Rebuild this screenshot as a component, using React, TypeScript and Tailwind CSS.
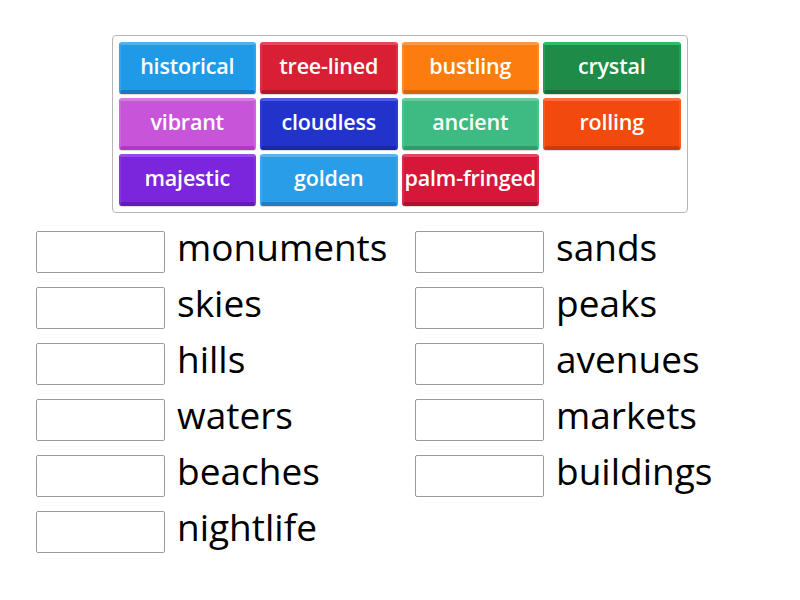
import React from "react";

const tiles = [
  { label: "historical", cls: "bg-[#1f9ae6] border-t-[#4cb4f2] border-b-[#1677c4] border-x-[#2ea5ee]" },
  { label: "tree-lined", cls: "bg-[#d81f33] border-t-[#e5485a] border-b-[#b3162a] border-x-[#df3144]" },
  { label: "bustling", cls: "bg-[#fd7c0e] border-t-[#ff9a40] border-b-[#dc6306] border-x-[#ff8a22]" },
  { label: "crystal", cls: "bg-[#1e8c48] border-t-[#2fbb62] border-b-[#176e38] border-x-[#23a052]" },
  { label: "vibrant", cls: "bg-[#c855d9] border-t-[#d979e6] border-b-[#ab3cbd] border-x-[#d065e0]" },
  { label: "cloudless", cls: "bg-[#2233cc] border-t-[#4c5be0] border-b-[#1a27a8] border-x-[#2b3dd6]" },
  { label: "ancient", cls: "bg-[#3dbb82] border-t-[#64cf9c] border-b-[#2d9d6a] border-x-[#4bc38c]" },
  { label: "rolling", cls: "bg-[#f24a0d] border-t-[#ff6f36] border-b-[#cf3a05] border-x-[#f85a1c]" },
  { label: "majestic", cls: "bg-[#7b25dd] border-t-[#974ae8] border-b-[#6219be] border-x-[#8634e2]" },
  { label: "golden", cls: "bg-[#2a9de8] border-t-[#56b6f2] border-b-[#1c7fcb] border-x-[#38a7ee]" },
  { label: "palm-fringed", cls: "bg-[#d6173a] border-t-[#e44660] border-b-[#b30f2d] border-x-[#dc2a4a]" },
];

const left = ["monuments", "skies", "hills", "waters", "beaches", "nightlife"];
const right = ["sands", "peaks", "avenues", "markets", "buildings"];

function Slot({ word }: { word: string }) {
  return (
    <div className="flex items-center h-[42px]">
      <div className="w-[129px] h-[42px] shrink-0 border border-[#9a9a9a] rounded-[2px] bg-white" />
      <span className="ml-3 text-[37px] leading-none text-black -mt-[11px]">{word}</span>
    </div>
  );
}

export default function App() {
  return (
    <div className="w-[800px] h-[600px] bg-white font-['Open_Sans',sans-serif]">
      <div className="pt-[35px] flex justify-center">
        <div className="ml-[-1px] w-[576px] border border-[#b5b5b5] rounded-[4px] p-[6px] grid grid-cols-4 gap-[4px]">
          {tiles.map((t) => (
            <div
              key={t.label}
              className={
                "h-[52px] rounded-[3px] border-t-[3px] border-b-[4px] border-x-[2px] flex items-center justify-center text-white text-[21.5px] font-semibold tracking-[-0.2px] pb-[2px] shadow-[0_1px_1px_rgba(0,0,0,0.15)] " +
                t.cls
              }
            >
              {t.label}
            </div>
          ))}
        </div>
      </div>
      <div className="flex mt-[18px] pl-[36px]">
        <div className="w-[379px] flex flex-col gap-[14px]">
          {left.map((w) => (
            <Slot key={w} word={w} />
          ))}
        </div>
        <div className="flex flex-col gap-[14px]">
          {right.map((w) => (
            <Slot key={w} word={w} />
          ))}
        </div>
      </div>
    </div>
  );
}
